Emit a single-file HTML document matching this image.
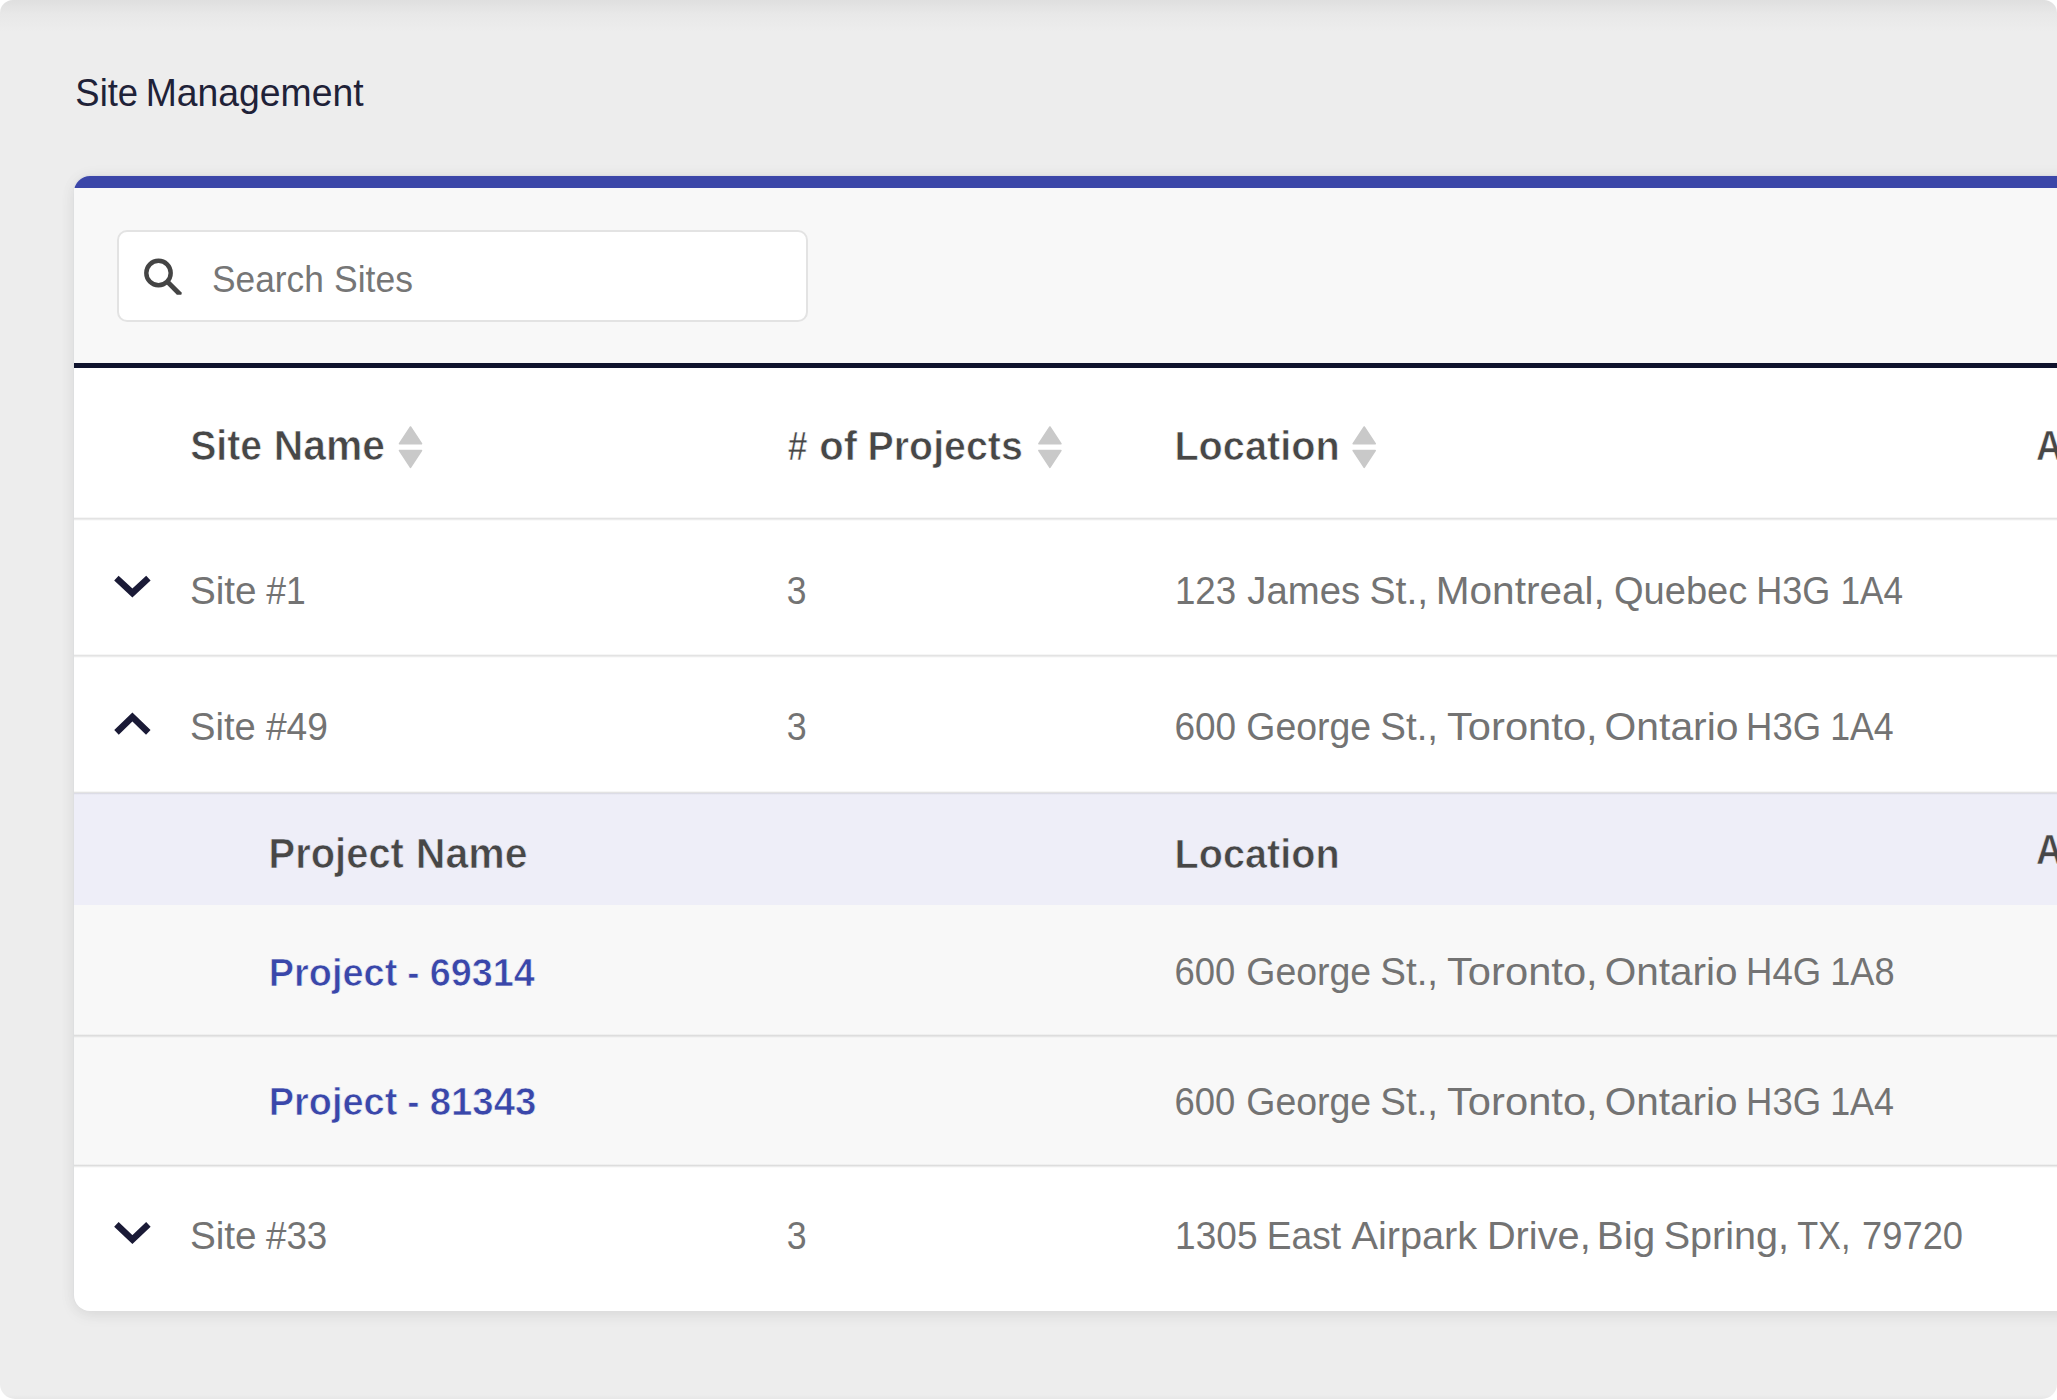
<!DOCTYPE html>
<html><head><meta charset="utf-8">
<style>
html,body{margin:0;padding:0;}
body{width:2057px;height:1400px;overflow:hidden;background:#fff;position:relative;font-family:"Liberation Sans",sans-serif;}
.abs{position:absolute;}
#frame{left:0;top:0;width:2057px;height:1399px;border-radius:13px 13px 15px 15px;background:linear-gradient(#dfdfdf 0px,#e8e8e8 14px,#ededed 32px,#ededed calc(100% - 4px),#e8e8e8 calc(100% - 1px));overflow:hidden;}
#card{left:74px;top:176px;width:2020px;height:1135px;border-radius:16px;background:#fff;overflow:hidden;box-shadow:0 4px 16px rgba(0,0,0,.07),0 0 18px rgba(0,0,0,.035),0 -1px 2px rgba(60,70,170,.05);}
.bar{left:0;top:0;width:100%;height:12px;background:#3b46a8;}
.searcharea{left:0;top:12px;width:100%;height:175px;background:#f8f8f8;}
.search{left:43px;top:54px;width:687px;height:88px;border:2px solid #e3e3e3;border-radius:10px;background:#fff;}
.dark{left:0;top:187px;width:100%;height:5px;background:#0f132d;}
.line{left:0;width:100%;height:4px;background:linear-gradient(rgba(0,0,0,.035) 0,rgba(0,0,0,.035) 1px,rgba(0,0,0,.11) 1px,rgba(0,0,0,.11) 2px,rgba(0,0,0,.075) 2px,rgba(0,0,0,.075) 3px,rgba(0,0,0,.02) 3px,rgba(0,0,0,.02) 4px);}
.sub{left:0;top:617px;width:100%;height:112px;background:#eeeef8;}
.proj{left:0;top:729px;width:100%;height:261px;background:#f8f8f8;}
svg{position:absolute;left:0;top:0;}
</style></head>
<body>
<div id="frame" class="abs"></div>
<div id="card" class="abs">
  <div class="abs bar"></div>
  <div class="abs searcharea"></div>
  <div class="abs search"></div>
  <div class="abs dark"></div>
  <div class="abs sub"></div>
  <div class="abs proj"></div>
  <div class="abs line" style="top:341px"></div>
  <div class="abs line" style="top:478px"></div>
  <div class="abs line" style="top:615px"></div>
  <div class="abs line" style="top:858px"></div>
  <div class="abs line" style="top:988px"></div>
</div>
<svg width="2057" height="1400" viewBox="0 0 2057 1400" font-family="Liberation Sans, sans-serif">
  <!-- search icon -->
  <circle cx="158.5" cy="273" r="12.2" fill="none" stroke="#444" stroke-width="4.4"/>
  <path d="M169.3 280.2 L181.6 292.5 Q182.2 294.7 180.8 294.7 L176.9 294.7 L165.8 283.5 Z" fill="#444"/>
  <!-- sort icons -->
  <g fill="#c9c9c9" stroke="#c9c9c9" stroke-width="1.6" stroke-linejoin="round">
    <path d="M410.5 427 L421.5 443.8 L399.5 443.8 Z M399.5 450.5 L421.5 450.5 L410.5 467.3 Z"/>
    <path d="M1049.9 427 L1060.9 443.8 L1038.9 443.8 Z M1038.9 450.5 L1060.9 450.5 L1049.9 467.3 Z"/>
    <path d="M1364.2 427 L1375.2 443.8 L1353.2 443.8 Z M1353.2 450.5 L1375.2 450.5 L1364.2 467.3 Z"/>
  </g>
  <!-- chevrons -->
  <g fill="none" stroke="#1a1a36" stroke-width="6.5" stroke-linecap="butt" stroke-linejoin="miter">
    <path d="M116.4 578.2 L132.4 593 L148.4 578.2"/>
    <path d="M116.5 732.4 L132.4 717 L148.3 732.4"/>
    <path d="M116.4 1224.4 L132.4 1239.5 L148.4 1224.4"/>
  </g>
<text x="75.34" y="106.20" font-size="38.12" font-weight="400" fill="#1f2238" textLength="62.80" lengthAdjust="spacingAndGlyphs">Site</text>
<text x="145.76" y="106.20" font-size="38.12" font-weight="400" fill="#1f2238" textLength="217.83" lengthAdjust="spacingAndGlyphs">Management</text>
<text x="212.05" y="292.00" font-size="36.98" font-weight="400" fill="#767676" textLength="111.74" lengthAdjust="spacingAndGlyphs">Search</text>
<text x="334.04" y="292.00" font-size="36.98" font-weight="400" fill="#767676" textLength="78.93" lengthAdjust="spacingAndGlyphs">Sites</text>
<text x="190.16" y="459.90" font-size="41.67" font-weight="700" fill="#474747" stroke="#ffffff" stroke-width="0.7" textLength="71.84" lengthAdjust="spacingAndGlyphs">Site</text>
<text x="273.74" y="459.90" font-size="41.67" font-weight="700" fill="#474747" stroke="#ffffff" stroke-width="0.7" textLength="111.20" lengthAdjust="spacingAndGlyphs">Name</text>
<text x="787.80" y="459.70" font-size="40.82" font-weight="700" fill="#474747" stroke="#ffffff" stroke-width="0.7" textLength="19.73" lengthAdjust="spacingAndGlyphs">#</text>
<text x="819.22" y="459.70" font-size="40.82" font-weight="700" fill="#474747" stroke="#ffffff" stroke-width="0.7" textLength="37.77" lengthAdjust="spacingAndGlyphs">of</text>
<text x="867.57" y="459.70" font-size="40.82" font-weight="700" fill="#474747" stroke="#ffffff" stroke-width="0.7" textLength="155.29" lengthAdjust="spacingAndGlyphs">Projects</text>
<text x="1174.39" y="459.90" font-size="41.46" font-weight="700" fill="#474747" stroke="#ffffff" stroke-width="0.7" textLength="165.23" lengthAdjust="spacingAndGlyphs">Location</text>
<text x="2036.02" y="459.80" font-size="42.10" font-weight="700" fill="#474747" stroke="#ffffff" stroke-width="0.7" textLength="26.74" lengthAdjust="spacingAndGlyphs">A</text>
<text x="189.90" y="603.90" font-size="38.83" font-weight="400" fill="#737373" textLength="66.68" lengthAdjust="spacingAndGlyphs">Site</text>
<text x="266.30" y="603.90" font-size="38.83" font-weight="400" fill="#737373" textLength="39.45" lengthAdjust="spacingAndGlyphs">#1</text>
<text x="786.68" y="604.00" font-size="38.54" font-weight="400" fill="#737373" textLength="19.74" lengthAdjust="spacingAndGlyphs">3</text>
<text x="1174.90" y="603.90" font-size="38.68" font-weight="400" fill="#737373" textLength="61.23" lengthAdjust="spacingAndGlyphs">123</text>
<text x="1247.30" y="603.90" font-size="38.68" font-weight="400" fill="#737373" textLength="112.82" lengthAdjust="spacingAndGlyphs">James</text>
<text x="1369.49" y="603.90" font-size="38.68" font-weight="400" fill="#737373" textLength="58.69" lengthAdjust="spacingAndGlyphs">St.,</text>
<text x="1435.75" y="603.90" font-size="38.68" font-weight="400" fill="#737373" textLength="169.13" lengthAdjust="spacingAndGlyphs">Montreal,</text>
<text x="1614.02" y="603.90" font-size="38.68" font-weight="400" fill="#737373" textLength="133.31" lengthAdjust="spacingAndGlyphs">Quebec</text>
<text x="1756.20" y="603.90" font-size="38.68" font-weight="400" fill="#737373" textLength="74.14" lengthAdjust="spacingAndGlyphs">H3G</text>
<text x="1840.38" y="603.90" font-size="38.68" font-weight="400" fill="#737373" textLength="62.58" lengthAdjust="spacingAndGlyphs">1A4</text>
<text x="189.93" y="740.40" font-size="39.25" font-weight="400" fill="#737373" textLength="65.88" lengthAdjust="spacingAndGlyphs">Site</text>
<text x="265.90" y="740.40" font-size="39.25" font-weight="400" fill="#737373" textLength="62.03" lengthAdjust="spacingAndGlyphs">#49</text>
<text x="786.68" y="740.40" font-size="38.97" font-weight="400" fill="#737373" textLength="19.95" lengthAdjust="spacingAndGlyphs">3</text>
<text x="1174.44" y="740.40" font-size="38.68" font-weight="400" fill="#737373" textLength="61.70" lengthAdjust="spacingAndGlyphs">600</text>
<text x="1246.33" y="740.40" font-size="38.68" font-weight="400" fill="#737373" textLength="124.72" lengthAdjust="spacingAndGlyphs">George</text>
<text x="1380.31" y="740.40" font-size="38.68" font-weight="400" fill="#737373" textLength="57.72" lengthAdjust="spacingAndGlyphs">St.,</text>
<text x="1447.00" y="740.40" font-size="38.68" font-weight="400" fill="#737373" textLength="150.66" lengthAdjust="spacingAndGlyphs">Toronto,</text>
<text x="1604.64" y="740.40" font-size="38.68" font-weight="400" fill="#737373" textLength="133.85" lengthAdjust="spacingAndGlyphs">Ontario</text>
<text x="1746.07" y="740.40" font-size="38.68" font-weight="400" fill="#737373" textLength="74.99" lengthAdjust="spacingAndGlyphs">H3G</text>
<text x="1830.15" y="740.40" font-size="38.68" font-weight="400" fill="#737373" textLength="63.51" lengthAdjust="spacingAndGlyphs">1A4</text>
<text x="268.59" y="867.65" font-size="41.74" font-weight="700" fill="#474747" stroke="#eeeef8" stroke-width="0.7" textLength="135.32" lengthAdjust="spacingAndGlyphs">Project</text>
<text x="415.83" y="867.65" font-size="41.74" font-weight="700" fill="#474747" stroke="#eeeef8" stroke-width="0.7" textLength="111.76" lengthAdjust="spacingAndGlyphs">Name</text>
<text x="1174.59" y="867.60" font-size="41.39" font-weight="700" fill="#474747" stroke="#eeeef8" stroke-width="0.7" textLength="164.99" lengthAdjust="spacingAndGlyphs">Location</text>
<text x="2036.02" y="863.90" font-size="42.38" font-weight="700" fill="#474747" stroke="#eeeef8" stroke-width="0.7" textLength="26.93" lengthAdjust="spacingAndGlyphs">A</text>
<text x="268.82" y="985.50" font-size="39.40" font-weight="700" fill="#3a47aa" stroke="#f8f8f8" stroke-width="0.7" textLength="128.48" lengthAdjust="spacingAndGlyphs">Project</text>
<text x="407.17" y="985.50" font-size="39.40" font-weight="700" fill="#3a47aa" stroke="#f8f8f8" stroke-width="0.7" textLength="12.16" lengthAdjust="spacingAndGlyphs">-</text>
<text x="429.74" y="985.50" font-size="39.40" font-weight="700" fill="#3a47aa" stroke="#f8f8f8" stroke-width="0.7" textLength="105.16" lengthAdjust="spacingAndGlyphs">69314</text>
<text x="1174.46" y="985.40" font-size="38.97" font-weight="400" fill="#737373" textLength="60.86" lengthAdjust="spacingAndGlyphs">600</text>
<text x="1246.34" y="985.40" font-size="38.97" font-weight="400" fill="#737373" textLength="124.86" lengthAdjust="spacingAndGlyphs">George</text>
<text x="1380.31" y="985.40" font-size="38.97" font-weight="400" fill="#737373" textLength="57.78" lengthAdjust="spacingAndGlyphs">St.,</text>
<text x="1447.00" y="985.40" font-size="38.97" font-weight="400" fill="#737373" textLength="150.72" lengthAdjust="spacingAndGlyphs">Toronto,</text>
<text x="1604.66" y="985.40" font-size="38.97" font-weight="400" fill="#737373" textLength="132.93" lengthAdjust="spacingAndGlyphs">Ontario</text>
<text x="1746.08" y="985.40" font-size="38.97" font-weight="400" fill="#737373" textLength="75.17" lengthAdjust="spacingAndGlyphs">H4G</text>
<text x="1830.14" y="985.40" font-size="38.97" font-weight="400" fill="#737373" textLength="64.40" lengthAdjust="spacingAndGlyphs">1A8</text>
<text x="268.82" y="1115.20" font-size="39.40" font-weight="700" fill="#3a47aa" stroke="#f8f8f8" stroke-width="0.7" textLength="128.48" lengthAdjust="spacingAndGlyphs">Project</text>
<text x="407.17" y="1115.20" font-size="39.40" font-weight="700" fill="#3a47aa" stroke="#f8f8f8" stroke-width="0.7" textLength="12.16" lengthAdjust="spacingAndGlyphs">-</text>
<text x="429.73" y="1115.20" font-size="39.40" font-weight="700" fill="#3a47aa" stroke="#f8f8f8" stroke-width="0.7" textLength="106.65" lengthAdjust="spacingAndGlyphs">81343</text>
<text x="1174.46" y="1114.90" font-size="38.97" font-weight="400" fill="#737373" textLength="60.86" lengthAdjust="spacingAndGlyphs">600</text>
<text x="1246.34" y="1114.90" font-size="38.97" font-weight="400" fill="#737373" textLength="124.86" lengthAdjust="spacingAndGlyphs">George</text>
<text x="1380.31" y="1114.90" font-size="38.97" font-weight="400" fill="#737373" textLength="57.78" lengthAdjust="spacingAndGlyphs">St.,</text>
<text x="1447.00" y="1114.90" font-size="38.97" font-weight="400" fill="#737373" textLength="150.72" lengthAdjust="spacingAndGlyphs">Toronto,</text>
<text x="1604.66" y="1114.90" font-size="38.97" font-weight="400" fill="#737373" textLength="132.93" lengthAdjust="spacingAndGlyphs">Ontario</text>
<text x="1746.08" y="1114.90" font-size="38.97" font-weight="400" fill="#737373" textLength="75.17" lengthAdjust="spacingAndGlyphs">H3G</text>
<text x="1830.16" y="1114.90" font-size="38.97" font-weight="400" fill="#737373" textLength="63.85" lengthAdjust="spacingAndGlyphs">1A4</text>
<text x="189.91" y="1248.90" font-size="38.97" font-weight="400" fill="#737373" textLength="66.75" lengthAdjust="spacingAndGlyphs">Site</text>
<text x="266.00" y="1248.90" font-size="38.97" font-weight="400" fill="#737373" textLength="61.27" lengthAdjust="spacingAndGlyphs">#33</text>
<text x="786.68" y="1249.00" font-size="38.83" font-weight="400" fill="#737373" textLength="19.88" lengthAdjust="spacingAndGlyphs">3</text>
<text x="1175.08" y="1249.00" font-size="38.54" font-weight="400" fill="#737373" textLength="82.40" lengthAdjust="spacingAndGlyphs">1305</text>
<text x="1266.81" y="1249.00" font-size="38.54" font-weight="400" fill="#737373" textLength="74.31" lengthAdjust="spacingAndGlyphs">East</text>
<text x="1351.40" y="1249.00" font-size="38.54" font-weight="400" fill="#737373" textLength="125.84" lengthAdjust="spacingAndGlyphs">Airpark</text>
<text x="1486.91" y="1249.00" font-size="38.54" font-weight="400" fill="#737373" textLength="103.78" lengthAdjust="spacingAndGlyphs">Drive,</text>
<text x="1596.75" y="1249.00" font-size="38.54" font-weight="400" fill="#737373" textLength="58.50" lengthAdjust="spacingAndGlyphs">Big</text>
<text x="1663.67" y="1249.00" font-size="38.54" font-weight="400" fill="#737373" textLength="125.41" lengthAdjust="spacingAndGlyphs">Spring,</text>
<text x="1797.20" y="1249.00" font-size="38.54" font-weight="400" fill="#737373" textLength="53.20" lengthAdjust="spacingAndGlyphs">TX,</text>
<text x="1862.06" y="1249.00" font-size="38.54" font-weight="400" fill="#737373" textLength="100.99" lengthAdjust="spacingAndGlyphs">79720</text>
</svg>
</body></html>
